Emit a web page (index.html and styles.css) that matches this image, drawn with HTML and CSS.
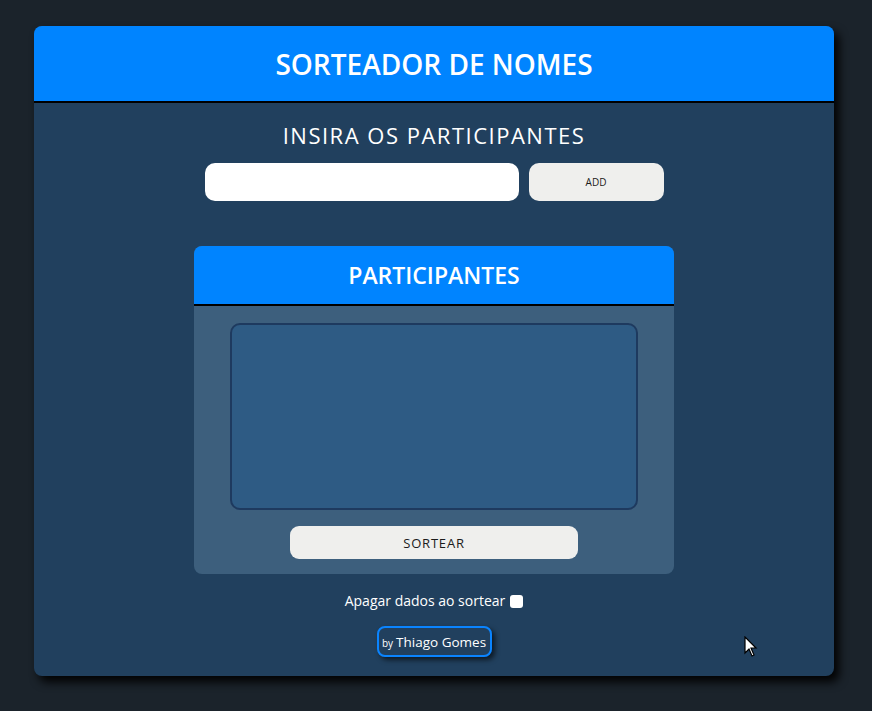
FILE: index.html
```html
<!DOCTYPE html>
<html lang="pt-BR">
<head>
<meta charset="utf-8">
<title>Sorteador de Nomes</title>
<link rel="stylesheet" href="styles.css">
</head>
<body>
<div class="card">
  <header class="card-header">
    <h1 class="title">SORTEADOR DE NOMES</h1>
  </header>
  <main class="card-body">
    <h2 class="subtitle">INSIRA OS PARTICIPANTES</h2>
    <div class="add-row">
      <input class="name-input" type="text">
      <button class="btn btn-add">ADD</button>
    </div>
    <section class="panel">
      <div class="panel-header">
        <h3 class="panel-title">PARTICIPANTES</h3>
      </div>
      <div class="panel-body">
        <div class="list-box"></div>
        <button class="btn btn-draw">SORTEAR</button>
      </div>
    </section>
    <label class="clear-option">Apagar dados ao sortear <span class="check"></span></label>
    <a class="author"><span class="by">by</span> Thiago Gomes</a>
  </main>
</div>
<svg class="cursor" width="14" height="22" viewBox="0 0 14 22">
  <path d="M1 1 L1 17 L5 13 L8 20 L10 19 L7 12 L12 12 Z" fill="#fff" stroke="#000" stroke-width="1.2" stroke-linejoin="miter"/>
</svg>
</body>
</html>
```
FILE: styles.css
```css
* { box-sizing: border-box; }
html, body { margin: 0; padding: 0; }
body {
  background: #1b232b;
  font-family: "Open Sans", "Noto Sans", sans-serif;
  color: #ffffff;
  width: 872px;
  height: 711px;
  overflow: hidden;
  padding: 26px 0 0 34px;
}
.card {
  width: 800px;
  border-radius: 8px;
  background: #21405e;
  box-shadow: 5px 6px 10px rgba(0, 0, 0, 0.95);
  overflow: hidden;
}
.card-header {
  height: 77px;
  background: #0084ff;
  border-bottom: 2px solid #000;
  display: flex;
  align-items: center;
  justify-content: center;
}
.title {
  margin: 0;
  font-size: 28px;
  font-weight: 600;
  letter-spacing: 0;
  color: #fff;
}
.card-body {
  display: flex;
  flex-direction: column;
  align-items: center;
  padding: 17px 0 19px;
}
.subtitle {
  margin: 0;
  font-size: 22px;
  font-weight: 400;
  line-height: 30px;
  letter-spacing: 1.5px;
}
.add-row {
  display: flex;
  gap: 10px;
  margin-top: 13px;
}
.name-input {
  width: 314px;
  height: 38px;
  border: none;
  border-radius: 10px;
  background: #fff;
  outline: none;
}
.btn {
  border: none;
  background: #efefed;
  color: #1b1b1b;
  font-family: "Open Sans", "Noto Sans", sans-serif;
  padding: 0;
}
.btn-add {
  width: 135px;
  height: 38px;
  border-radius: 10px;
  font-size: 10px;
}
.panel {
  width: 480px;
  margin-top: 45px;
  border-radius: 8px;
  overflow: hidden;
  background: #3d5f7d;
}
.panel-header {
  height: 60px;
  background: #0084ff;
  border-bottom: 2px solid #000;
  display: flex;
  align-items: center;
  justify-content: center;
}
.panel-title {
  margin: 0;
  font-size: 23px;
  font-weight: 600;
  letter-spacing: 0;
}
.panel-body {
  display: flex;
  flex-direction: column;
  align-items: center;
  padding: 17px 0 15px;
}
.list-box {
  width: 408px;
  height: 187px;
  border: 2px solid #1e3a5f;
  border-radius: 10px;
  background: #2e5b84;
}
.btn-draw {
  width: 288px;
  height: 33px;
  margin-top: 16px;
  border-radius: 9px;
  font-size: 13px;
  letter-spacing: 0.8px;
}
.clear-option {
  margin-top: 17px;
  font-size: 14px;
  line-height: 20px;
  display: flex;
  align-items: center;
  gap: 5px;
}
.check {
  width: 13px;
  height: 13px;
  border-radius: 3px;
  background: #fff;
  display: inline-block;
}
.author {
  margin-top: 15px;
  width: 115px;
  height: 31px;
  border: 2px solid #0a84ff;
  border-radius: 8px;
  box-shadow: 3px 3px 5px rgba(0, 0, 0, 0.6);
  display: flex;
  align-items: center;
  justify-content: center;
  gap: 3px;
  font-size: 13.5px;
  color: #fff;
}
.by {
  font-size: 10px;
  margin-top: 3px;
}
.cursor {
  position: fixed;
  left: 744px;
  top: 636px;
}
```
